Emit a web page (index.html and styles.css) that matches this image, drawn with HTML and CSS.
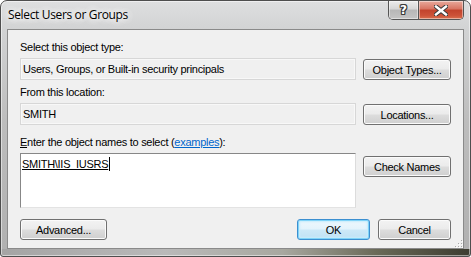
FILE: index.html
```html
<!DOCTYPE html>
<html>
<head>
<meta charset="utf-8">
<title>Select Users or Groups</title>
<link rel="stylesheet" href="styles.css">
</head>
<body>
<div class="window">
  <div class="titlebar">
    <div class="title">Select Users or Groups</div>
    <div class="caption">
      <div class="cbtn help"><span>?</span></div>
      <div class="cbtn close">
        <svg width="14" height="11" viewBox="0 0 14 11">
          <path d="M2 1.5 L12 9.5 M12 1.5 L2 9.5" stroke="#3a3a3a" stroke-width="4.4" stroke-linecap="square" fill="none"/>
          <path d="M2 1.5 L12 9.5 M12 1.5 L2 9.5" stroke="#ffffff" stroke-width="2.4" stroke-linecap="square" fill="none"/>
        </svg>
      </div>
    </div>
  </div>
  <div class="client">
    <div class="section">
      <div class="label">Select this object type:</div>
      <div class="field ro">Users, Groups, or Built-in security principals</div>
      <button class="btn side">Object Types...</button>
    </div>
    <div class="section">
      <div class="label">From this location:</div>
      <div class="field ro">SMITH</div>
      <button class="btn side">Locations...</button>
    </div>
    <div class="section last">
      <div class="label"><u>E</u>nter the object names to select (<a class="link">examples</a>):</div>
      <div class="field edit"><span class="resolved">SMITH\IIS_IUSRS</span><span class="caret"></span></div>
      <button class="btn side top">Check Names</button>
    </div>
    <div class="footer">
      <button class="btn adv">Advanced...</button>
      <div class="spacer"></div>
      <button class="btn ok">OK</button>
      <button class="btn cancel">Cancel</button>
    </div>
    <div class="grip">
      <svg width="8" height="8" viewBox="0 0 8 8">
        <g fill="#a8a8a8">
          <rect x="6" y="0" width="1" height="1"/>
          <rect x="3" y="3" width="1" height="1"/>
          <rect x="6" y="3" width="1" height="1"/>
          <rect x="0" y="6" width="1" height="1"/>
          <rect x="3" y="6" width="1" height="1"/>
          <rect x="6" y="6" width="1" height="1"/>
        </g>
        <g fill="#ffffff">
          <rect x="7" y="1" width="1" height="1"/>
          <rect x="4" y="4" width="1" height="1"/>
          <rect x="7" y="4" width="1" height="1"/>
          <rect x="1" y="7" width="1" height="1"/>
          <rect x="4" y="7" width="1" height="1"/>
          <rect x="7" y="7" width="1" height="1"/>
        </g>
      </svg>
    </div>
  </div>
</div>
</body>
</html>
```

FILE: styles.css
```css
html, body {
  margin: 0;
  padding: 0;
}
body {
  width: 471px;
  height: 257px;
  overflow: hidden;
  background: #ffffff;
  font-family: "Liberation Sans", Arial, sans-serif;
  font-size: 11px;
  letter-spacing: -0.28px;
  color: #000;
}
.window {
  box-sizing: border-box;
  width: 471px;
  height: 257px;
  border: 1px solid #4e4e4e;
  border-radius: 7px 7px 3px 3px;
  padding: 0 6px 7px 6px;
  display: flex;
  flex-direction: column;
  background:
    linear-gradient(90deg, #a4a4a4 0%, #b9b9b9 35%, #a8a8a0 60%, #6a6a58 80%, #3c3c30 100%) left bottom / 100% 7px no-repeat,
    linear-gradient(180deg, #dedfe0 0px, #d2d3d4 28px, #bdbdbd 120px, #b0b0b0 100%);
  box-shadow: inset 0 0 0 1px rgba(255,255,255,0.5);
}
.titlebar {
  height: 28px;
  display: flex;
  justify-content: space-between;
  align-items: flex-start;
}
.title {
  font-family: "Open Sans", "Noto Sans", sans-serif;
  font-size: 12px;
  letter-spacing: -0.35px;
  color: #000;
  padding: 6px 0 0 1px;
  line-height: 16px;
  text-shadow: 0 0 6px #fff, 0 0 8px #fff, 0 0 10px #fff;
}
.caption {
  display: flex;
  box-sizing: border-box;
  width: 76px;
  height: 19px;
  border: 1px solid #555;
  border-top: none;
  border-radius: 0 0 5px 5px;
  overflow: hidden;
}
.cbtn {
  display: flex;
  align-items: center;
  justify-content: center;
  box-shadow: inset 0 0 0 1px rgba(255,255,255,0.45);
}
.help {
  width: 29px;
  border-right: 1px solid #555;
  background: linear-gradient(180deg, #ececec 0%, #d6d6d6 45%, #b7b7b7 50%, #c4c4c4 100%);
}
.help span {
  font-family: "DejaVu Sans", sans-serif;
  font-weight: bold;
  font-size: 12px;
  line-height: 12px;
  letter-spacing: 0;
  color: #fff;
  text-shadow: 1px 0 #3a3a3a, -1px 0 #3a3a3a, 0 1px #3a3a3a, 0 -1px #3a3a3a, 1px 1px #3a3a3a, -1px -1px #3a3a3a, 1px -1px #3a3a3a, -1px 1px #3a3a3a;
}
.close {
  flex: 1;
  background: linear-gradient(180deg, #e9aa9c 0%, #d87361 45%, #c2432c 50%, #cc5238 80%, #d9714f 100%);
}
.close svg {
  display: block;
}
.client {
  position: relative;
  flex: 1;
  border: 1px solid #8a8a8a;
  background: #f0f0f0;
  padding: 11px 12px 8px 12px;
  display: flex;
  flex-direction: column;
}
.section {
  display: grid;
  grid-template-columns: 336px 88px;
  column-gap: 7px;
  margin-bottom: 6px;
}
.section:nth-child(2) {
  margin-bottom: 11px;
}
.section.last {
  margin-bottom: 11px;
}
.label {
  grid-column: 1 / 3;
  height: 13px;
  line-height: 13px;
  margin-bottom: 4px;
  white-space: nowrap;
}
.link {
  color: #0066cc;
  text-decoration: underline;
}
.field {
  grid-column: 1;
  box-sizing: border-box;
  white-space: nowrap;
}
.ro {
  height: 22px;
  line-height: 20px;
  border: 1px solid #d7d7d7;
  background: #f0f0f0;
  padding: 0 2px;
  box-shadow: inset 0 0 0 1px #f8f8f8;
}
.edit {
  height: 55px;
  background: #fff;
  border-top: 1px solid #878787;
  border-left: 1px solid #878787;
  border-right: 1px solid #dcdcdc;
  border-bottom: 1px solid #e3e3e3;
  padding: 3px 1px;
  line-height: 13px;
}
.resolved {
  text-decoration: underline;
}
.caret {
  display: inline-block;
  width: 1px;
  height: 14px;
  background: #000;
  vertical-align: -3px;
  margin-left: 1px;
}
.btn {
  box-sizing: border-box;
  height: 21px;
  padding: 0;
  margin: 0;
  font-family: "Liberation Sans", Arial, sans-serif;
  font-size: 11px;
  letter-spacing: -0.28px;
  color: #000;
  border: 1px solid #707070;
  border-radius: 3px;
  background: linear-gradient(180deg, #f3f3f3 0%, #ebebeb 48%, #dddddd 52%, #cfcfcf 100%);
  box-shadow: inset 0 0 0 1px #fbfbfb;
}
.side {
  grid-column: 2;
  grid-row: 2;
  align-self: start;
  margin-top: 1px;
}
.side.top {
  margin-top: 3px;
}
.footer {
  display: flex;
  align-items: flex-start;
  gap: 8px;
}
.spacer {
  flex: 1;
}
.adv {
  width: 87px;
}
.ok, .cancel {
  width: 73px;
}
.ok {
  border-color: #3c8fd0;
  background: linear-gradient(180deg, #eef8fd 0%, #e3f3fc 48%, #cde9f8 52%, #bfe1f4 100%);
  box-shadow: inset 0 0 0 1px #7fd3f8, inset 0 0 2px 2px #c8ecfb;
}
.grip {
  position: absolute;
  right: 0;
  bottom: 0;
  width: 8px;
  height: 8px;
}
.grip svg {
  display: block;
}
```
